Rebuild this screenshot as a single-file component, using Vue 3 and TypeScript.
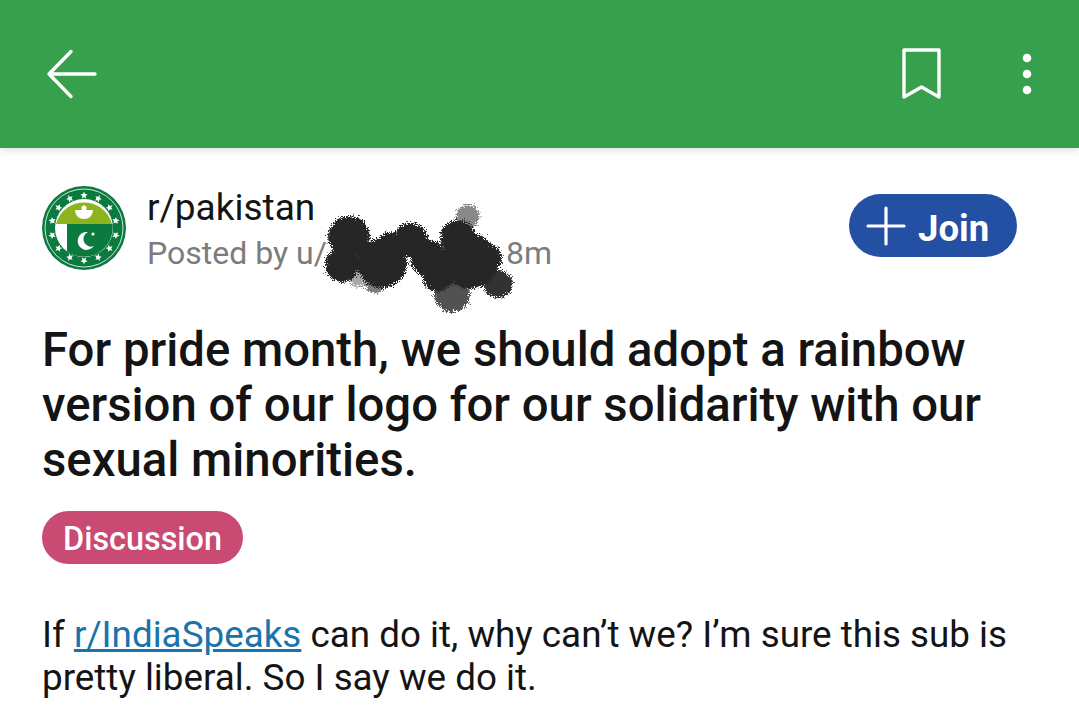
<script setup lang="ts">
const stars: number[] = Array.from({ length: 14 }, (_, i) => (i * 360) / 14)
const blobs: [number, number, number, number][] = [
  [349, 237, 21, 1], [342, 265, 17, 1], [382, 263, 25, 1], [391, 246, 14, 1], [411, 240, 17, 1],
  [428, 258, 18, 1], [438, 277, 15, 1], [458, 238, 18, 1], [470, 261, 28, 1], [488, 258, 14, 1],
  [498, 284, 14, 0.95], [452, 294, 18, 0.8], [468, 216, 11.500, 0.55], [357, 279, 8, 0.4], [375, 282, 11, 0.6],
]
</script>

<template>
  <div class="page">
    <header class="bar">
      <svg class="back" width="52" height="52" viewBox="0 0 52 52" fill="none" stroke="#fff" stroke-width="3.4" stroke-linecap="round" stroke-linejoin="round">
        <path d="M3 26H49M25 3.500 3 26 25 48.500" />
      </svg>
      <span class="spacer"></span>
      <svg class="mark" width="40" height="52" viewBox="0 0 40 52" fill="none" stroke="#fff" stroke-width="3.400" stroke-linejoin="round">
        <path d="M2 2H37V49L19.500 39 2 49Z" />
      </svg>
      <svg class="more" width="12" height="44" viewBox="0 0 12 44" fill="#fff">
        <circle cx="6" cy="6" r="4.300" /><circle cx="6" cy="22" r="4.300" /><circle cx="6" cy="38" r="4.300" />
      </svg>
    </header>

    <main class="content">
      <section class="meta">
        <svg class="avatar" width="84" height="84" viewBox="0 0 84 84">
          <circle cx="42" cy="42" r="42" fill="#0b7a3e" />
          <circle cx="42" cy="42" r="39" fill="none" stroke="#fff" stroke-width="0.800" />
          <g fill="#fff">
            <path v-for="a in stars" :key="a" d="M42 5.500 43 8 45.500 8.300 43.600 10 44.200 12.500 42 11.200 39.800 12.500 40.400 10 38.500 8.300 41 8Z" :transform="`rotate(${a} 42 42)`" />
          </g>
          <circle cx="42" cy="42" r="29" fill="#fff" />
          <path d="M14 38A29 29 0 0 1 70 38Z" fill="#8db41e" />
          <path d="M25 38H70.500A29 29 0 0 1 25 65.500Z" fill="#0b7a3e" />
          <path d="M33 24H51C50.500 30 47 33 42 33 37 33 33.500 30 33 24Z" fill="#fff" />
          <circle cx="42" cy="22" r="2.500" fill="#fff" />
          <path d="M46 46A9 9 0 1 0 52 60 7.500 7.500 0 1 1 46 46Z" fill="#fff" />
          <circle cx="51" cy="48" r="1.600" fill="#fff" />
        </svg>
        <div class="who">
          <div class="sub">r/pakistan</div>
          <div class="posted"><span>Posted by u/</span><span class="age">8m</span></div>
        </div>
        <button class="join">
          <svg width="40" height="40" viewBox="0 0 40 40" stroke="#fff" stroke-width="3.200" stroke-linecap="round">
            <path d="M20 2V38M2 20H38" />
          </svg>
          <span class="join-label">Join</span>
        </button>
      </section>

      <h1 class="title">For pride month, we should adopt a rainbow version of our logo for our solidarity with our sexual minorities.</h1>
      <span class="flair">Discussion</span>
      <p class="body">If <a class="link">r/IndiaSpeaks</a> can do it, why can’t we? I’m sure this sub is pretty liberal. So I say we do it.</p>
    </main>

    <svg class="scribble" width="1079" height="719" viewBox="0 0 1079 719">
      <defs>
        <filter id="grain" x="-10%" y="-10%" width="120%" height="120%">
          <feTurbulence type="fractalNoise" baseFrequency="0.9" numOctaves="2" seed="4" />
          <feDisplacementMap in="SourceGraphic" scale="11" xChannelSelector="R" yChannelSelector="G" />
        </filter>
      </defs>
      <g filter="url(#grain)">
        <circle v-for="(b, i) in blobs" :key="i" :cx="b[0]" :cy="b[1]" :r="b[2]" fill="#262626" :fill-opacity="b[3]" />
      </g>
    </svg>
  </div>
</template>

<style>
html, body { margin: 0; background: #fff; }
</style>

<style scoped>
.page {
  position: relative;
  width: 1079px;
  height: 719px;
  overflow: hidden;
  background: #fff;
  font-family: Roboto, "Liberation Sans", sans-serif;
}
.bar {
  height: 148px;
  box-sizing: border-box;
  display: flex;
  align-items: center;
  padding: 0 46px;
  background: #37a04c;
  box-shadow: 0 2px 8px rgba(0, 0, 0, 0.14);
  position: relative;
}
.spacer { flex: 1; }
.mark { margin-right: 79px; }
.content { padding: 38px 62px 0 42px; }
.meta { display: flex; align-items: center; height: 84px; }
.avatar { flex: none; }
.who { margin-left: 21px; flex: 1; }
.sub { font-size: 37px; line-height: 45px; height: 43px; color: #141414; font-weight: 400; }
.posted { font-size: 32px; line-height: 50px; color: #7c7c7c; display: flex; height: 44px; }
.age { margin-left: 179px; }
.join {
  width: 168px;
  height: 63px;
  border: 0;
  border-radius: 32px;
  background: #2450a4;
  color: #fff;
  font: 700 36.500px Roboto, "Liberation Sans", sans-serif;
  display: flex;
  align-items: center;
  gap: 12px;
  padding: 2px 0 0 17px;
  box-sizing: border-box;
  margin-top: -6px;
}
.join-label { padding-top: 4px; }
.title {
  margin: 53px 0 0;
  font-size: 47.300px;
  line-height: 55px;
  font-weight: 500;
  color: #141414;
}
.flair {
  display: inline-block;
  margin-top: 23px;
  height: 53px;
  line-height: 56px;
  padding: 0 21px;
  border-radius: 27px;
  background: #c94a72;
  color: #fff;
  font-size: 32.400px;
  font-weight: 500;
}
.body {
  margin: 49px 0 0;
  font-size: 36.800px;
  line-height: 43px;
  color: #141414;
}
.link { color: #1a74ab; text-decoration: underline; }
.scribble { position: absolute; left: 0; top: 0; pointer-events: none; }
</style>
